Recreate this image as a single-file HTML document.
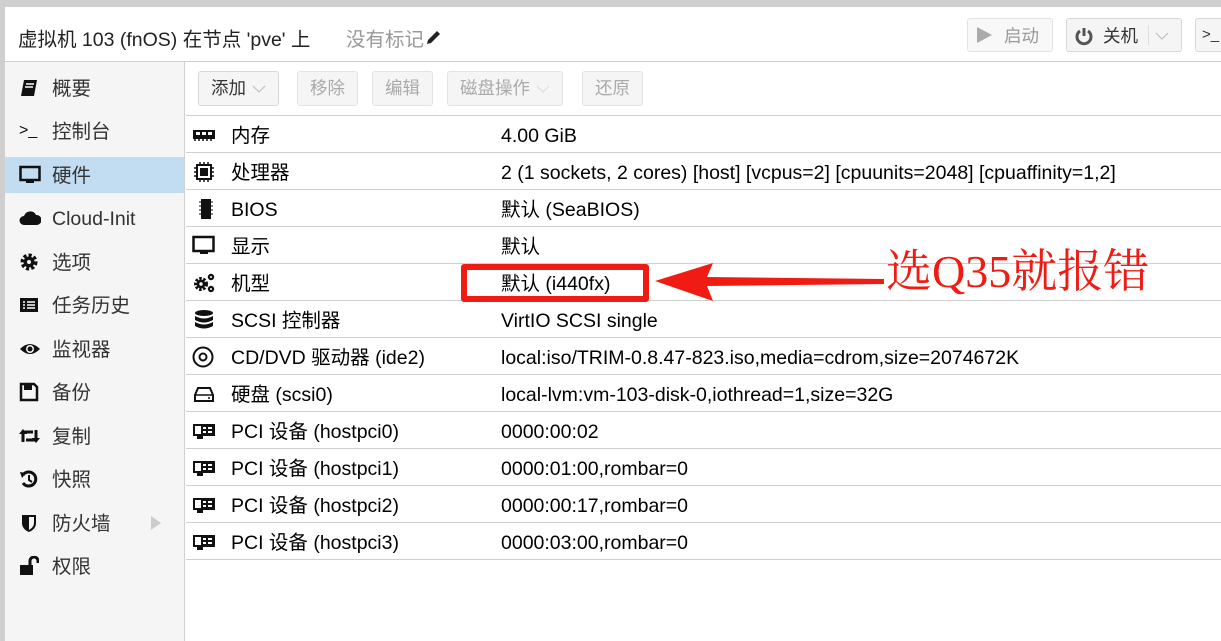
<!DOCTYPE html>
<html><head><meta charset="utf-8"><style>
*{margin:0;padding:0;box-sizing:border-box}
body{width:1221px;height:641px;overflow:hidden;background:#fff;font-family:"Liberation Sans","Noto Sans CJK SC",sans-serif;color:#000;position:relative}
.a{position:absolute}
svg{display:block}
.nav{left:5px;top:62px;width:180px;height:579px;background:#f5f5f5;border-right:1px solid #d0d0d0}
.ni{position:absolute;left:0;width:179px;height:36px;font-size:19.5px;color:#333;line-height:38px}
.ni span{position:absolute;left:47px}
.ni i{position:absolute;left:14px;top:8px;width:22px;height:20px;display:block;font-style:normal;line-height:20px}
.btn{position:absolute;top:71px;height:35px;border:1px solid #e3e3e3;border-radius:3px;background:#f5f5f5;font-size:17.5px;color:#aaa;line-height:35px;padding:0 12px;display:flex;align-items:center;gap:6px}
.row{position:absolute;left:186px;width:1035px;height:37px;border-bottom:1px solid #d0d0d0;font-size:19.5px;line-height:40px}
.row .k{position:absolute;left:45px}
.row .v{position:absolute;left:315px}
.row i{position:absolute;left:6px;top:8px;width:24px;height:22px;display:block}
</style></head><body>
<div class="a" style="left:0;top:0;width:1221px;height:7px;background:#cfcfcf"></div>
<div class="a" style="left:0;top:7px;width:5px;height:634px;background:#cfcfcf"></div>
<div class="a" style="left:5px;top:61px;width:1216px;height:1px;background:#d0d0d0"></div>
<div class="a" style="left:18px;top:23px;font-size:19.5px;color:#222">虚拟机 103 (fnOS) 在节点 'pve' 上</div>
<div class="a" style="left:346px;top:23px;font-size:19.5px;color:#999;display:flex;align-items:center">没有标记<svg width="18" height="18" viewBox="0 0 18 18"><path d="M3 15l1-4 9-9 3 3-9 9z" fill="#222"/></svg></div>
<div class="a" style="left:967px;top:18px;width:86px;height:34px;border:1px solid #e3e3e3;border-radius:3px;background:#f8f8f8;color:#999;font-size:17.5px;line-height:34px"><svg class="a" style="left:8px;top:8px" width="16" height="16"><path d="M1 0L16 8L1 16z" fill="#aaa"/></svg><span class="a" style="left:36px">启动</span></div>
<div class="a" style="left:1066px;top:18px;width:116px;height:34px;border:1px solid #d8d8d8;border-radius:3px;background:#f5f5f5;color:#333;font-size:17.5px;line-height:34px"><svg class="a" style="left:7px;top:7px" width="20" height="20"><path d="M6 5A7 7 0 1 0 14 5" fill="none" stroke="#555" stroke-width="3"/><path d="M10 2v8" stroke="#555" stroke-width="3"/></svg><span class="a" style="left:36px">关机</span><span class="a" style="left:81px;top:6px;width:1px;height:20px;background:#ddd"></span><svg class="a" style="left:88px;top:12px" width="14" height="10"><path d="M1 2l6 6 6-6" fill="none" stroke="#bbb"/></svg></div>
<div class="a" style="left:1195px;top:18px;width:40px;height:34px;border:1px solid #d8d8d8;border-radius:3px;background:#f5f5f5;font-size:15px;line-height:32px;padding-left:6px;color:#333">&gt;_</div>

<div class="a nav">
<div class="ni" style="top:8px"><i><svg width="20" height="20"><path d="M5 2h13l-3 16H2z" fill="#111"/><path d="M7 6h8M6 9h8" stroke="#fff" stroke-width="1.5"/></svg></i><span>概要</span></div>
<div class="ni" style="top:51px"><i style="font-size:16px;color:#111">&gt;_</i><span>控制台</span></div>
<div class="ni" style="top:95px;background:#c2ddf2"><i><svg width="22" height="20"><rect x="1.5" y="2" width="19" height="13" fill="none" stroke="#111" stroke-width="2.5"/><path d="M7 15h8v3H7z" fill="#111"/></svg></i><span>硬件</span></div>
<div class="ni" style="top:138px"><i><svg width="22" height="20"><path d="M5 17a4.5 4.5 0 0 1 0-9a6.5 6.5 0 0 1 12-1a5 5 0 0 1 1 10z" fill="#111"/></svg></i><span>Cloud-Init</span></div>
<div class="ni" style="top:182px"><i><svg width="20" height="20"><circle cx="10" cy="10" r="6.5" fill="none" stroke="#111" stroke-width="4" stroke-dasharray="3 2"/><circle cx="10" cy="10" r="5.5" fill="#111"/><circle cx="10" cy="10" r="2" fill="#f5f5f5"/></svg></i><span>选项</span></div>
<div class="ni" style="top:225px"><i><svg width="20" height="20"><rect x="1" y="3" width="18" height="14" fill="#111"/><path d="M4 7h2M8 7h8M4 10h2M8 10h8M4 13h2M8 13h8" stroke="#fff" stroke-width="1.5"/></svg></i><span>任务历史</span></div>
<div class="ni" style="top:269px"><i><svg width="22" height="20"><path d="M1 10Q11 0 21 10Q11 20 1 10z" fill="#111"/><circle cx="11" cy="10" r="4" fill="#f5f5f5"/><circle cx="11" cy="10" r="2.5" fill="#111"/></svg></i><span>监视器</span></div>
<div class="ni" style="top:312px"><i><svg width="20" height="20"><path d="M2 2h13l3 3v13H2z" fill="none" stroke="#111" stroke-width="2.5"/><rect x="5" y="3" width="8" height="5" fill="#111"/></svg></i><span>备份</span></div>
<div class="ni" style="top:356px"><i><svg width="22" height="20"><path d="M4 16V6h10M17 4v10H7" fill="none" stroke="#111" stroke-width="3"/><path d="M0 8l4-5 4 5zM13 12l4 5 4-5z" fill="#111"/></svg></i><span>复制</span></div>
<div class="ni" style="top:399px"><i><svg width="20" height="20"><path d="M4 6A7 7 0 1 1 4 14" fill="none" stroke="#111" stroke-width="3"/><path d="M10 6v5l3 2" fill="none" stroke="#111" stroke-width="2"/><path d="M1 3l6 1-4 5z" fill="#111"/></svg></i><span>快照</span></div>
<div class="ni" style="top:443px"><i><svg width="20" height="20"><path d="M3 2h14v8q0 6-7 9q-7-3-7-9z" fill="#111"/><path d="M10 4h5v6q0 4-5 7z" fill="#f5f5f5"/></svg></i><span>防火墙</span><svg class="a" style="left:146px;top:11px" width="10" height="14"><path d="M0 0l10 7-10 7z" fill="#ccc"/></svg></div>
<div class="ni" style="top:486px"><i><svg width="20" height="20"><rect x="1" y="9" width="13" height="10" fill="#111"/><path d="M11 9V5a4 4 0 0 1 8 0v2" fill="none" stroke="#111" stroke-width="3"/></svg></i><span>权限</span></div>
</div>

<div class="btn" style="left:198px;color:#333;border-color:#d8d8d8">添加 <svg width="14" height="10"><path d="M1 2l6 6 6-6" fill="none" stroke="#bbb"/></svg></div>
<div class="btn" style="left:297px">移除</div>
<div class="btn" style="left:372px">编辑</div>
<div class="btn" style="left:447px">磁盘操作 <svg width="14" height="10"><path d="M1 2l6 6 6-6" fill="none" stroke="#ddd"/></svg></div>
<div class="btn" style="left:582px">还原</div>
<div class="a" style="left:186px;top:115px;width:1035px;height:1px;background:#d0d0d0"></div>

<div class="row" style="top:116px"><i><svg width="24" height="22"><rect x="1" y="6" width="22" height="9" fill="#111"/><path d="M4 8h4v3H4zM10 8h4v3h-4zM16 8h4v3h-4z" fill="#fff"/><path d="M3 15v2M7 15v2M11 15v2M15 15v2M19 15v2" stroke="#111" stroke-width="1.5"/></svg></i><span class="k">内存</span><span class="v">4.00 GiB</span></div>
<div class="row" style="top:153px"><i><svg width="24" height="22"><rect x="5" y="4" width="14" height="14" fill="none" stroke="#111" stroke-width="2"/><rect x="8" y="7" width="8" height="8" fill="#111"/><path d="M8 1v3M12 1v3M16 1v3M8 18v3M12 18v3M16 18v3M2 7h3M2 11h3M2 15h3M19 7h3M19 11h3M19 15h3" stroke="#111" stroke-width="1.5"/></svg></i><span class="k">处理器</span><span class="v">2 (1 sockets, 2 cores) [host] [vcpus=2] [cpuunits=2048] [cpuaffinity=1,2]</span></div>
<div class="row" style="top:190px"><i><svg width="24" height="22"><rect x="9" y="1" width="10" height="20" fill="#111"/><path d="M7 4h2M7 8h2M7 12h2M7 16h2M19 4h2M19 8h2M19 12h2M19 16h2" stroke="#111"/></svg></i><span class="k">BIOS</span><span class="v">默认 (SeaBIOS)</span></div>
<div class="row" style="top:227px"><i><svg width="24" height="22"><rect x="1.5" y="2" width="20" height="14" fill="none" stroke="#111" stroke-width="2.5"/><path d="M8 16h8v3H8z" fill="#111"/></svg></i><span class="k">显示</span><span class="v">默认</span></div>
<div class="row" style="top:264px"><i><svg width="24" height="22"><circle cx="9" cy="12" r="5.5" fill="none" stroke="#111" stroke-width="3" stroke-dasharray="2.5 1.5"/><circle cx="9" cy="12" r="4.5" fill="#111"/><circle cx="9" cy="12" r="1.7" fill="#fff"/><circle cx="19" cy="5" r="3.2" fill="#111"/><circle cx="19" cy="17" r="3.2" fill="#111"/><circle cx="19" cy="5" r="1" fill="#fff"/><circle cx="19" cy="17" r="1" fill="#fff"/></svg></i><span class="k">机型</span><span class="v">默认 (i440fx)</span></div>
<div class="row" style="top:301px"><i><svg width="24" height="22"><ellipse cx="12" cy="4" rx="9" ry="3" fill="#111"/><path d="M3 7q9 5 18 0v4q-9 5-18 0zM3 13q9 5 18 0v4q-9 5-18 0z" fill="#111"/></svg></i><span class="k">SCSI 控制器</span><span class="v">VirtIO SCSI single</span></div>
<div class="row" style="top:338px"><i><svg width="24" height="22"><circle cx="11" cy="11" r="9.5" fill="none" stroke="#111" stroke-width="2"/><circle cx="11" cy="11" r="3.5" fill="none" stroke="#111" stroke-width="2"/></svg></i><span class="k">CD/DVD 驱动器 (ide2)</span><span class="v">local:iso/TRIM-0.8.47-823.iso,media=cdrom,size=2074672K</span></div>
<div class="row" style="top:375px"><i><svg width="24" height="22"><path d="M6 5h12l3 7v6H3v-6z" fill="none" stroke="#111" stroke-width="2"/><path d="M3 12h18" stroke="#111" stroke-width="1.5"/><circle cx="17" cy="15" r="1" fill="#111"/></svg></i><span class="k">硬盘 (scsi0)</span><span class="v">local-lvm:vm-103-disk-0,iothread=1,size=32G</span></div>
<div class="row" style="top:412px"><i><svg width="24" height="22"><path d="M1 4h22v12H1z" fill="#111"/><path d="M3 6h6v8H3z M11 7h3v2h-3zM16 7h4v2h-4zM11 11h3v2h-3zM16 11h4v2h-4z" fill="#fff"/><path d="M5 16h6v3H5z" fill="#111"/></svg></i><span class="k">PCI 设备 (hostpci0)</span><span class="v">0000:00:02</span></div>
<div class="row" style="top:449px"><i><svg width="24" height="22"><path d="M1 4h22v12H1z" fill="#111"/><path d="M3 6h6v8H3z M11 7h3v2h-3zM16 7h4v2h-4zM11 11h3v2h-3zM16 11h4v2h-4z" fill="#fff"/><path d="M5 16h6v3H5z" fill="#111"/></svg></i><span class="k">PCI 设备 (hostpci1)</span><span class="v">0000:01:00,rombar=0</span></div>
<div class="row" style="top:486px"><i><svg width="24" height="22"><path d="M1 4h22v12H1z" fill="#111"/><path d="M3 6h6v8H3z M11 7h3v2h-3zM16 7h4v2h-4zM11 11h3v2h-3zM16 11h4v2h-4z" fill="#fff"/><path d="M5 16h6v3H5z" fill="#111"/></svg></i><span class="k">PCI 设备 (hostpci2)</span><span class="v">0000:00:17,rombar=0</span></div>
<div class="row" style="top:523px"><i><svg width="24" height="22"><path d="M1 4h22v12H1z" fill="#111"/><path d="M3 6h6v8H3z M11 7h3v2h-3zM16 7h4v2h-4zM11 11h3v2h-3zM16 11h4v2h-4z" fill="#fff"/><path d="M5 16h6v3H5z" fill="#111"/></svg></i><span class="k">PCI 设备 (hostpci3)</span><span class="v">0000:03:00,rombar=0</span></div>

<div class="a" style="left:461px;top:264px;width:188px;height:38px;border:6px solid #f01c14;border-radius:3px"></div>
<svg class="a" style="left:650px;top:260px" width="240" height="44"><path d="M5 21L63 3L57 17L234 19L234 24L57 26L63 41z" fill="#f01c14"/></svg>
<div class="a" style="left:886px;top:244px;font-size:46px;color:#f01c14;font-family:'Liberation Serif','Noto Serif CJK SC',serif;line-height:56px">选Q35就报错</div>
</body></html>
